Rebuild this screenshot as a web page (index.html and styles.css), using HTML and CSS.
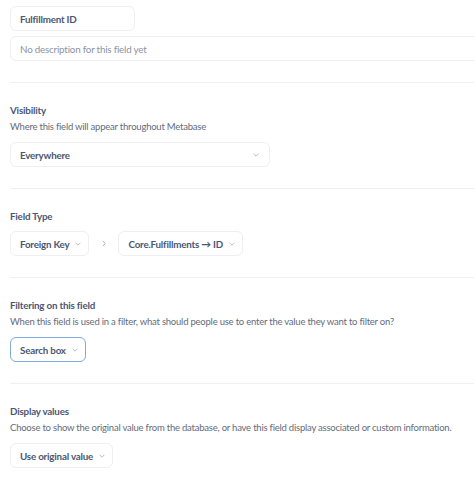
FILE: index.html
```html
<!DOCTYPE html>
<html>
<head>
<meta charset="utf-8">
<link rel="stylesheet" href="styles.css">
</head>
<body>
<div class="page">
  <div class="header">
    <div class="input name">Fulfillment ID</div>
    <div class="input desc">No description for this field yet</div>
  </div>

  <div class="section">
    <div class="title">Visibility</div>
    <div class="sub">Where this field will appear throughout Metabase</div>
    <div class="select wide"><span>Everywhere</span><svg class="chev" viewBox="0 0 10 6"><path d="M1 1l4 4 4-4"/></svg></div>
  </div>

  <div class="section">
    <div class="title">Field Type</div>
    <div class="row">
      <div class="select"><span>Foreign Key</span><svg class="chev" viewBox="0 0 10 6"><path d="M1 1l4 4 4-4"/></svg></div>
      <svg class="sep" viewBox="0 0 6 10"><path d="M1 1l4 4-4 4"/></svg>
      <div class="select"><span>Core.Fulfillments → ID</span><svg class="chev" viewBox="0 0 10 6"><path d="M1 1l4 4 4-4"/></svg></div>
    </div>
  </div>

  <div class="section">
    <div class="title">Filtering on this field</div>
    <div class="sub">When this field is used in a filter, what should people use to enter the value they want to filter on?</div>
    <div class="select active"><span>Search box</span><svg class="chev" viewBox="0 0 10 6"><path d="M1 1l4 4 4-4"/></svg></div>
  </div>

  <div class="section last">
    <div class="title">Display values</div>
    <div class="sub">Choose to show the original value from the database, or have this field display associated or custom information.</div>
    <div class="select"><span>Use original value</span><svg class="chev" viewBox="0 0 10 6"><path d="M1 1l4 4 4-4"/></svg></div>
  </div>
</div>
</body>
</html>
```

FILE: styles.css
```css
html, body {
  margin: 0;
  padding: 0;
  background: #ffffff;
  overflow: hidden;
}
body {
  font-family: Lato, "Noto Sans", sans-serif;
  color: #4c5773;
}
.page {
  margin-left: 10px;
  width: 520px;
  padding-top: 6px;
}
.header {
  display: flex;
  flex-direction: column;
  gap: 5px;
  padding-bottom: 21px;
}
.input {
  box-sizing: border-box;
  height: 25px;
  border: 1px solid #eeeff1;
  border-radius: 6px;
  padding: 0 9px;
  display: flex;
  align-items: center;
  font-size: 9.8px;
  letter-spacing: -0.2px;
}
.input.name {
  width: 125px;
  font-weight: 700;
}
.input.desc {
  width: 100%;
  color: #8d93a3;
}
.section {
  display: flex;
  flex-direction: column;
  align-items: flex-start;
  border-top: 1px solid #f0f0f1;
  padding-top: 20px;
  padding-bottom: 21px;
}
.title {
  font-size: 9.8px;
  font-weight: 700;
  line-height: 14px;
  letter-spacing: -0.2px;
}
.sub {
  font-size: 9.5px;
  line-height: 14px;
  margin-top: 3px;
  color: #656b7b;
  white-space: nowrap;
  letter-spacing: -0.22px;
}
.select {
  box-sizing: border-box;
  height: 25px;
  margin-top: 8px;
  display: flex;
  align-items: center;
  gap: 6px;
  padding: 0 7px 0 9px;
  border: 1px solid #eeeff1;
  border-radius: 6px;
  font-size: 9.8px;
  font-weight: 700;
  letter-spacing: -0.2px;
  white-space: nowrap;
}
.select.wide {
  width: 260px;
  justify-content: space-between;
  padding-right: 10px;
}
.select.active {
  border-color: #7fa9dd;
}
.chev {
  width: 6px;
  height: 4px;
  fill: none;
  stroke: #9aa0ad;
  stroke-width: 1.2;
}
.row {
  display: flex;
  align-items: center;
  margin-top: 8px;
}
.row .select {
  margin-top: 0;
}
.sep {
  width: 4px;
  height: 7px;
  fill: none;
  stroke: #9aa0ad;
  stroke-width: 1.2;
  margin: 0 12px 0 13px;
}
```
